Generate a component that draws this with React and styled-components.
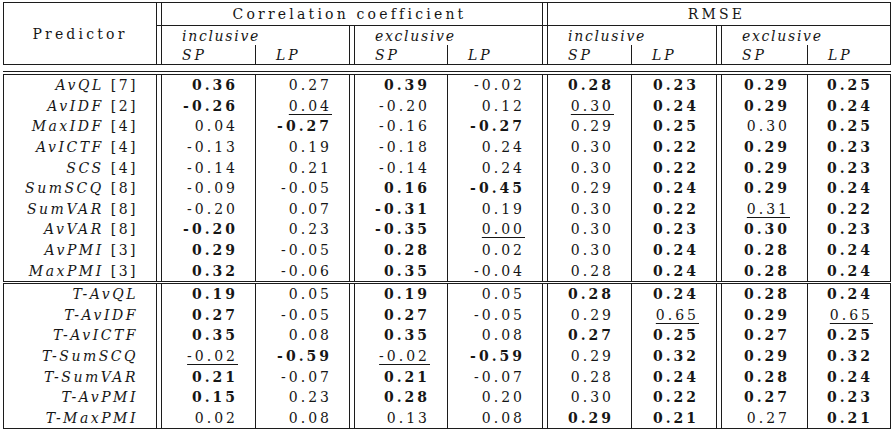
import React from 'react';
import styled, { createGlobalStyle, css } from 'styled-components';

const INK = '#1c1c1c';
const COLS = '153px 99px 94px 98px 95px 89px 85px 91px 83px';
const EDGES = ['single', 'double', 'single', 'double', 'single', 'double', 'single', 'double', 'single'];

const groups = [
  [
    ['AvQL', '7', '*0.36 0.27 *0.39 -0.02 *0.28 *0.23 *0.29 *0.25'],
    ['AvIDF', '2', '*-0.26 _0.04 -0.20 0.12 _0.30 *0.24 *0.29 *0.24'],
    ['MaxIDF', '4', '0.04 *-0.27 -0.16 *-0.27 0.29 *0.25 0.30 *0.25'],
    ['AvICTF', '4', '-0.13 0.19 -0.18 0.24 0.30 *0.22 *0.29 *0.23'],
    ['SCS', '4', '-0.14 0.21 -0.14 0.24 0.30 *0.22 *0.29 *0.23'],
    ['SumSCQ', '8', '-0.09 -0.05 *0.16 *-0.45 0.29 *0.24 *0.29 *0.24'],
    ['SumVAR', '8', '-0.20 0.07 *-0.31 0.19 0.30 *0.22 _0.31 *0.22'],
    ['AvVAR', '8', '*-0.20 0.23 *-0.35 _0.00 0.30 *0.23 *0.30 *0.23'],
    ['AvPMI', '3', '*0.29 -0.05 *0.28 0.02 0.30 *0.24 *0.28 *0.24'],
    ['MaxPMI', '3', '*0.32 -0.06 *0.35 -0.04 0.28 *0.24 *0.28 *0.24'],
  ],
  [
    ['T-AvQL', '', '*0.19 0.05 *0.19 0.05 *0.28 *0.24 *0.28 *0.24'],
    ['T-AvIDF', '', '*0.27 -0.05 *0.27 -0.05 0.29 _0.65 *0.29 _0.65'],
    ['T-AvICTF', '', '*0.35 0.08 *0.35 0.08 *0.27 *0.25 *0.27 *0.25'],
    ['T-SumSCQ', '', '_-0.02 *-0.59 _-0.02 *-0.59 0.29 *0.32 *0.29 *0.32'],
    ['T-SumVAR', '', '*0.21 -0.07 *0.21 -0.07 0.28 *0.24 *0.28 *0.24'],
    ['T-AvPMI', '', '*0.15 0.23 *0.28 0.20 0.30 *0.22 *0.27 *0.23'],
    ['T-MaxPMI', '', '0.02 0.08 0.13 0.08 *0.29 *0.21 0.27 *0.21'],
  ],
];

const parseValue = (raw) => {
  if (raw[0] === '*') return { text: raw.slice(1), bold: true };
  if (raw[0] === '_') return { text: raw.slice(1), under: true };
  return { text: raw };
};

const App = () => (
  <>
    <GlobalStyle />
    <Page>
      <Head>
        <HeadCell $col="1" $row="1 / span 3" $edge="single" $justify="center">
          Predictor
        </HeadCell>
        <HeadCell $col="2 / span 4" $row="1" $edge="double" $rule $justify="center">
          Correlation coefficient
        </HeadCell>
        <HeadCell $col="6 / span 4" $row="1" $edge="double" $rule $justify="center">
          RMSE
        </HeadCell>
        {[2, 4, 6, 8].map((c, i) => (
          <GroupLabel key={c} $col={`${c} / span 2`} $row="2" $edge="double">
            {i % 2 ? 'exclusive' : 'inclusive'}
          </GroupLabel>
        ))}
        {[2, 3, 4, 5, 6, 7, 8, 9].map((c) => (
          <ColLabel key={c} $col={`${c}`} $row="3" $edge={EDGES[c - 1]}>
            {c % 2 === 0 ? 'SP' : 'LP'}
          </ColLabel>
        ))}
      </Head>

      <Body>
        {groups.map((rows, gi) => (
          <Group key={gi}>
            {rows.map(([name, cite, values]) => (
              <React.Fragment key={name}>
                <NameCell $edge="single">
                  <Label>
                    <Name>{name}</Name>
                    {cite && ` [${cite}]`}
                  </Label>
                </NameCell>
                {values.split(' ').map((raw, i) => {
                  const v = parseValue(raw);
                  return (
                    <ValueCell key={i} $edge={EDGES[i + 1]}>
                      <Value $bold={v.bold} $under={v.under}>{v.text}</Value>
                    </ValueCell>
                  );
                })}
              </React.Fragment>
            ))}
          </Group>
        ))}
      </Body>
    </Page>
  </>
);

const GlobalStyle = createGlobalStyle`
  html, body {
    margin: 0;
    padding: 0;
    background: #fff;
  }
  body {
    font-family: 'DejaVu Serif', 'Liberation Serif', serif;
    color: #161616;
  }
`;

const Page = styled.div`
  padding: 2px 0 0 3px;
  width: 888px;
`;

const edgeStyle = ({ $edge }) => {
  if ($edge === 'double') {
    return css`
      border-left: 1px solid ${INK};
      box-shadow: inset 4px 0 0 #fff, inset 5px 0 0 ${INK};
    `;
  }
  if ($edge === 'single') return css`border-left: 1px solid ${INK};`;
  return css`border-left: 1px solid transparent;`;
};

const Cell = styled.div`
  display: flex;
  align-items: center;
  justify-content: ${(p) => p.$justify || 'flex-end'};
  box-sizing: border-box;
  min-width: 0;
  white-space: nowrap;
  ${edgeStyle}
`;

const Head = styled.div`
  display: grid;
  grid-template-columns: ${COLS};
  grid-template-rows: 23px 19px 19px;
  width: 888px;
  box-sizing: border-box;
  border-top: 1px solid ${INK};
  border-bottom: 1px solid ${INK};
  border-right: 1px solid ${INK};
`;

const HeadCell = styled(Cell)`
  grid-column: ${(p) => p.$col};
  grid-row: ${(p) => p.$row};
  font-size: 14px;
  letter-spacing: 3.2px;
  ${(p) => p.$rule && css`border-bottom: 1px solid ${INK};`}
`;

const GroupLabel = styled(Cell)`
  grid-column: ${(p) => p.$col};
  grid-row: ${(p) => p.$row};
  justify-content: flex-start;
  padding-left: ${(p) => (p.$edge === 'double' ? 25 : 20)}px;
  font-size: 14px;
  font-style: italic;
  letter-spacing: 1.7px;
`;

const ColLabel = styled(Cell)`
  grid-column: ${(p) => p.$col};
  grid-row: ${(p) => p.$row};
  justify-content: flex-start;
  padding-left: ${(p) => (p.$edge === 'double' ? 25 : 20)}px;
  font-size: 14px;
  font-style: italic;
  letter-spacing: 3px;
`;

const Body = styled.div`
  margin-top: 6px;
  width: 888px;
  border-top: 1px solid ${INK};
  padding-top: 2px;
`;

const Group = styled.div`
  display: grid;
  grid-template-columns: ${COLS};
  grid-auto-rows: 20.6px;
  box-sizing: border-box;
  border-top: 1px solid ${INK};
  border-bottom: 1px solid ${INK};
  border-right: 1px solid ${INK};

  & + & {
    margin-top: 1px;
  }
`;

const NameCell = styled(Cell)`
  padding-right: 18px;
  font-size: 14px;
  letter-spacing: 2.5px;
`;

const Label = styled.span``;

const Name = styled.span`
  font-style: italic;
`;

const ValueCell = styled(Cell)`
  padding-right: 17px;
  font-size: 14px;
  letter-spacing: 3px;
`;

const Value = styled.span`
  font-weight: ${(p) => (p.$bold ? 700 : 400)};
  text-decoration: ${(p) => (p.$under ? 'underline' : 'none')};
  text-decoration-thickness: 1px;
  text-underline-offset: 3px;
`;

export default App;
